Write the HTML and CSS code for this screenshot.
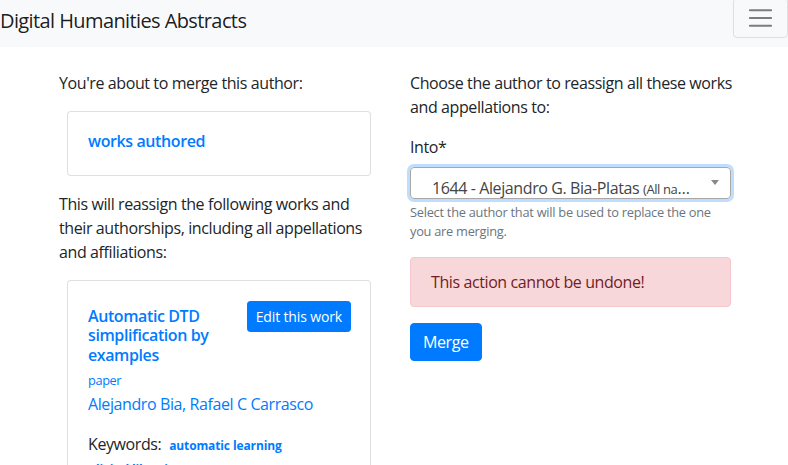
FILE: index.html
```html
<!DOCTYPE html>
<html lang="en">
<head>
<meta charset="utf-8">
<title>Merge author – Digital Humanities Abstracts</title>
<link rel="stylesheet" href="styles.css">
</head>
<body>
<header class="navbar">
  <a class="brand" href="#">Digital Humanities Abstracts</a>
  <button class="toggler" type="button" aria-label="Toggle navigation">
    <svg class="toggler-icon" viewBox="0 0 30 30" width="30" height="30">
      <path d="M4 7h22M4 15h22M4 23h22" stroke="rgba(0,0,0,0.5)" stroke-width="2" stroke-linecap="round" stroke-miterlimit="10"/>
    </svg>
  </button>
</header>

<main class="merge">
  <section class="col col-left">
    <p class="lead-text">You're about to merge this author:</p>
    <div class="card">
      <div class="card-body card-body-short">
        <a class="card-link-title" href="#">works authored</a>
      </div>
    </div>

    <p class="lead-text spaced">This will reassign the following works and their authorships, including all appellations and affiliations:</p>

    <div class="card">
      <div class="card-body">
        <a class="btn btn-primary btn-sm float-right" href="#">Edit this work</a>
        <a class="work-title" href="#">Automatic DTD simplification by examples</a>
        <div class="work-type">paper</div>
        <div class="work-authors"><a href="#">Alejandro Bia</a>, <a href="#">Rafael C Carrasco</a></div>
        <div class="keywords">
          <span class="kw-label">Keywords:</span>
          <a class="badge" href="#">automatic learning</a>
          <a class="badge" href="#">digital libraries</a>
          <a class="badge" href="#">document type definitions</a>
        </div>
      </div>
    </div>
  </section>

  <section class="col col-right">
    <p class="lead-text lead-wide">Choose the author to reassign all these works and appellations to:</p>
    <div class="form-group">
      <label class="form-label">Into*</label>
      <div class="select-box">
        <span class="select-text">1644 - Alejandro G. Bia-Platas <small>(All names: Alejandro Bia)</small></span>
        <span class="select-arrow"></span>
      </div>
      <small class="form-help">Select the author that will be used to replace the one you are merging.</small>
    </div>
    <div class="alert-danger">This action cannot be undone!</div>
    <button class="btn btn-primary btn-merge" type="button">Merge</button>
  </section>
</main>
</body>
</html>
```

FILE: styles.css
```css
* {
  box-sizing: border-box;
}

html, body {
  margin: 0;
  padding: 0;
  height: 100%;
  overflow: hidden;
}

body {
  font-family: "Open Sans", "Noto Sans", "DejaVu Sans", sans-serif;
  font-size: 16px;
  line-height: 1.5;
  letter-spacing: -0.025em;
  color: #212529;
  background: #fff;
}

a {
  color: #007bff;
  text-decoration: none;
}

p {
  margin: 0 0 16px;
}

/* top bar */
.navbar {
  height: 47px;
  background: #f8f9fa;
  display: flex;
  justify-content: space-between;
  align-items: flex-start;
}

.brand {
  margin-top: 6px;
  font-size: 20px;
  line-height: 30px;
  letter-spacing: -0.03em;
  color: rgba(0, 0, 0, 0.9);
}

.toggler {
  width: 55px;
  height: 40px;
  margin-top: -2px;
  padding: 4px 12px;
  background: transparent;
  border: 1px solid rgba(0, 0, 0, 0.1);
  border-radius: 4px;
  display: flex;
  align-items: center;
  justify-content: center;
}

.toggler-icon {
  display: block;
}

/* two column merge form */
.merge {
  display: flex;
  align-items: flex-start;
  gap: 31px;
  padding: 24px 0 0 59px;
}

.col-left {
  width: 320px;
}

.col-right {
  width: 321px;
}

.lead-wide {
  margin-right: -10px;
}

.spaced {
  margin-top: 16px;
}

.card {
  margin: 0 8px;
  background: #fff;
  border: 1px solid rgba(0, 0, 0, 0.125);
  border-radius: 4px;
}

.card-body {
  padding: 20px;
}

.card-body-short {
  padding-bottom: 24px;
}

.card-link-title {
  display: block;
  font-weight: 600;
  line-height: 1.2;
}

.float-right {
  float: right;
  margin-left: 8px;
  margin-right: -1px;
}

.work-title {
  display: block;
  margin-top: 6px;
  font-weight: 600;
  line-height: 1.2;
}

.work-type {
  margin-top: 6px;
  font-size: 12.8px;
  line-height: 19.2px;
  color: #007bff;
}

.work-authors {
  margin-top: 2px;
  color: #007bff;
}

.keywords {
  margin-top: 16px;
}

.badge {
  display: inline-block;
  padding: 3px 4px;
  font-size: 12px;
  font-weight: 700;
  line-height: 1;
  letter-spacing: -0.01em;
}

/* buttons */
.btn {
  display: inline-block;
  font-family: inherit;
  letter-spacing: inherit;
  border: 1px solid transparent;
  cursor: pointer;
}

.btn-primary {
  color: #fff;
  background: #007bff;
  border-color: #007bff;
}

.btn-sm {
  padding: 4px 8px;
  font-size: 14px;
  line-height: 21px;
  letter-spacing: -0.01em;
  border-radius: 3.2px;
}

.btn-merge {
  padding: 6px 12px;
  font-size: 16px;
  line-height: 24px;
  border-radius: 4px;
}

/* form */
.form-group {
  margin-bottom: 16px;
}

.form-label {
  display: block;
  margin-bottom: 8px;
}

.select-box {
  position: relative;
  height: 32px;
  border: 1px solid #a8a8a8;
  border-radius: 4px;
  box-shadow: 0 0 0 3px rgba(0, 123, 255, 0.25);
  padding: 10px 30px 0 21px;
  overflow: hidden;
}

.select-text {
  display: block;
  line-height: 20px;
  color: #444;
  white-space: nowrap;
  overflow: hidden;
  text-overflow: ellipsis;
}

.select-text small {
  font-size: 13px;
}

.select-arrow {
  position: absolute;
  right: 11px;
  top: 12px;
  width: 0;
  height: 0;
  border-style: solid;
  border-width: 5px 4px 0 4px;
  border-color: #888 transparent transparent transparent;
}

.form-help {
  display: block;
  margin-top: 4px;
  font-size: 12.8px;
  line-height: 19.2px;
  letter-spacing: -0.02em;
  color: #6c757d;
}

.alert-danger {
  margin-bottom: 16px;
  padding: 12px 20px;
  color: #721c24;
  background: #f8d7da;
  border: 1px solid #f5c6cb;
  border-radius: 4px;
}
```
